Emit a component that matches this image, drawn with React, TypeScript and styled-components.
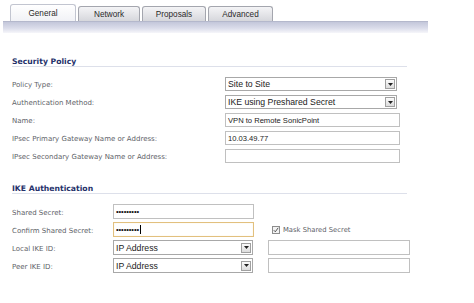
import React from "react";
import styled, { createGlobalStyle } from "styled-components";

const GlobalStyle = createGlobalStyle`
  html, body { margin: 0; padding: 0; background: #ffffff; }
  body { font-family: "DejaVu Sans", Verdana, sans-serif; }
`;

const Page = styled.div`
  width: 474px;
  height: 303px;
  overflow: hidden;
  background: #fff;
`;

const TabStrip = styled.div`
  display: flex;
  align-items: flex-end;
  gap: 2px;
  height: 17px;
  padding: 4px 0 0 10px;
`;

const Tab = styled.div<{ $w: number; $active?: boolean }>`
  box-sizing: border-box;
  width: ${(p) => p.$w}px;
  height: ${(p) => (p.$active ? 17 : 15)}px;
  display: flex;
  align-items: center;
  justify-content: center;
  font-family: "Liberation Sans", Arial, sans-serif;
  font-size: 8.2px;
  color: #2a2a2a;
  border: 1px solid ${(p) => (p.$active ? "#c2c5d0" : "#a4a6ae")};
  border-bottom: none;
  border-radius: 3px 3px 0 0;
  background: ${(p) =>
    p.$active
      ? "linear-gradient(#ffffff, #f1f2f6)"
      : "linear-gradient(#f4f4f6, #d6d7dc)"};
  padding-top: ${(p) => (p.$active ? 0 : 1)}px;
`;

const TabBar = styled.div`
  margin-left: 3px;
  width: 425px;
  height: 11px;
  border-top: 1px solid #b4b8cc;
  background: linear-gradient(#c3c7da, #dadcea 55%, #f6f6fa);
`;

const Section = styled.div<{ $top: number }>`
  margin-top: ${(p) => p.$top}px;
  padding-left: 12px;
`;

const Heading = styled.div`
  width: 395px;
  height: 9px;
  line-height: 9px;
  font-family: "DejaVu Sans", Verdana, sans-serif;
  font-weight: bold;
  font-size: 7.7px;
  color: #25316a;
  border-bottom: 1px solid #dde0ea;
`;

const FormGrid = styled.div<{ $cols: string; $gap: number }>`
  display: grid;
  grid-template-columns: ${(p) => p.$cols};
  row-gap: ${(p) => p.$gap}px;
  align-items: center;
  margin-top: 10px;
`;

const Label = styled.div`
  font-family: "DejaVu Sans", Verdana, sans-serif;
  font-size: 7px;
  color: #5e6268;
  white-space: nowrap;
  padding-top: 2px;
`;

const Select = styled.div<{ $w: number; $h: number }>`
  box-sizing: border-box;
  width: ${(p) => p.$w}px;
  height: ${(p) => p.$h}px;
  border: 1px solid #a8a8a8;
  background: #fff;
  display: flex;
  align-items: center;
  justify-content: space-between;
  padding-left: 2px;
  padding-right: 1px;
  font-family: "Liberation Sans", Arial, sans-serif;
  font-size: 8.7px;
  color: #222;
  white-space: nowrap;
`;

const ArrowBtn = styled.span`
  box-sizing: border-box;
  width: 10px;
  height: 10px;
  border: 1px solid #a0a0a0;
  background: linear-gradient(#fbfbfb, #dcdcdc);
  display: flex;
  align-items: center;
  justify-content: center;
`;

const Field = styled.div<{ $w: number; $h: number; $focus?: boolean }>`
  box-sizing: border-box;
  width: ${(p) => p.$w}px;
  height: ${(p) => p.$h}px;
  border: 1px solid ${(p) => (p.$focus ? "#e2c07e" : "#c0c0c0")};
  box-shadow: ${(p) => (p.$focus ? "inset 0 0 1px #f0dcb0" : "none")};
  background: #fff;
  display: flex;
  align-items: center;
  padding-left: 2px;
  font-family: "Liberation Sans", Arial, sans-serif;
  font-size: 7.6px;
  color: #222;
  white-space: nowrap;
`;

const Dots = styled.span`
  font-family: "Liberation Sans", Arial, sans-serif;
  font-size: 7.6px;
  letter-spacing: -0.1px;
  color: #111;
`;

const Caret = styled.span`
  display: inline-block;
  width: 1px;
  height: 9px;
  background: #000;
  margin-left: 1px;
`;

const CheckCell = styled.div`
  display: flex;
  align-items: center;
  gap: 3px;
  padding-left: 4px;
`;

const CheckBox = styled.span`
  box-sizing: border-box;
  width: 8px;
  height: 8px;
  border: 1px solid #8c8c8c;
  background: #f3f3f3;
  display: flex;
  align-items: center;
  justify-content: center;
`;

const CheckText = styled.span`
  font-family: "DejaVu Sans", Verdana, sans-serif;
  font-size: 6.8px;
  color: #5e6268;
  white-space: nowrap;
`;

const Arrow = () => (
  <ArrowBtn>
    <svg width="5" height="3" viewBox="0 0 5 3">
      <path d="M0 0 H5 L2.5 3 Z" fill="#222" />
    </svg>
  </ArrowBtn>
);

const DropDown: React.FC<{ w: number; h: number; value: string }> = ({ w, h, value }) => (
  <Select $w={w} $h={h}>
    <span>{value}</span>
    <Arrow />
  </Select>
);

const tabs = [
  { name: "General", w: 66, active: true },
  { name: "Network", w: 62 },
  { name: "Proposals", w: 64 },
  { name: "Advanced", w: 65 },
];

export default function App() {
  return (
    <Page>
      <GlobalStyle />
      <TabStrip>
        {tabs.map((t) => (
          <Tab key={t.name} $w={t.w} $active={t.active}>
            {t.name}
          </Tab>
        ))}
      </TabStrip>
      <TabBar />

      <Section $top={24}>
        <Heading>Security Policy</Heading>
        <FormGrid $cols="213px auto" $gap={4}>
          <Label>Policy Type:</Label>
          <DropDown w={172} h={14} value="Site to Site" />
          <Label>Authentication Method:</Label>
          <DropDown w={172} h={14} value="IKE using Preshared Secret" />
          <Label>Name:</Label>
          <Field $w={175} $h={14}>VPN to Remote SonicPoint</Field>
          <Label>IPsec Primary Gateway Name or Address:</Label>
          <Field $w={175} $h={14}>10.03.49.77</Field>
          <Label>IPsec Secondary Gateway Name or Address:</Label>
          <Field $w={175} $h={14} />
        </FormGrid>
      </Section>

      <Section $top={21}>
        <Heading>IKE Authentication</Heading>
        <FormGrid $cols="101px 155px auto" $gap={3}>
          <Label>Shared Secret:</Label>
          <Field $w={141} $h={15}>
            <Dots>•••••••••</Dots>
          </Field>
          <div />
          <Label>Confirm Shared Secret:</Label>
          <Field $w={141} $h={15} $focus>
            <Dots>•••••••••</Dots>
            <Caret />
          </Field>
          <CheckCell>
            <CheckBox>
              <svg width="6" height="6" viewBox="0 0 6 6">
                <path d="M0.8 3.2 L2.3 4.8 L5.2 0.8" fill="none" stroke="#444" strokeWidth="0.9" />
              </svg>
            </CheckBox>
            <CheckText>Mask Shared Secret</CheckText>
          </CheckCell>
          <Label>Local IKE ID:</Label>
          <DropDown w={140} h={15} value="IP Address" />
          <Field $w={142} $h={15} />
          <Label>Peer IKE ID:</Label>
          <DropDown w={140} h={15} value="IP Address" />
          <Field $w={142} $h={15} />
        </FormGrid>
      </Section>
    </Page>
  );
}
